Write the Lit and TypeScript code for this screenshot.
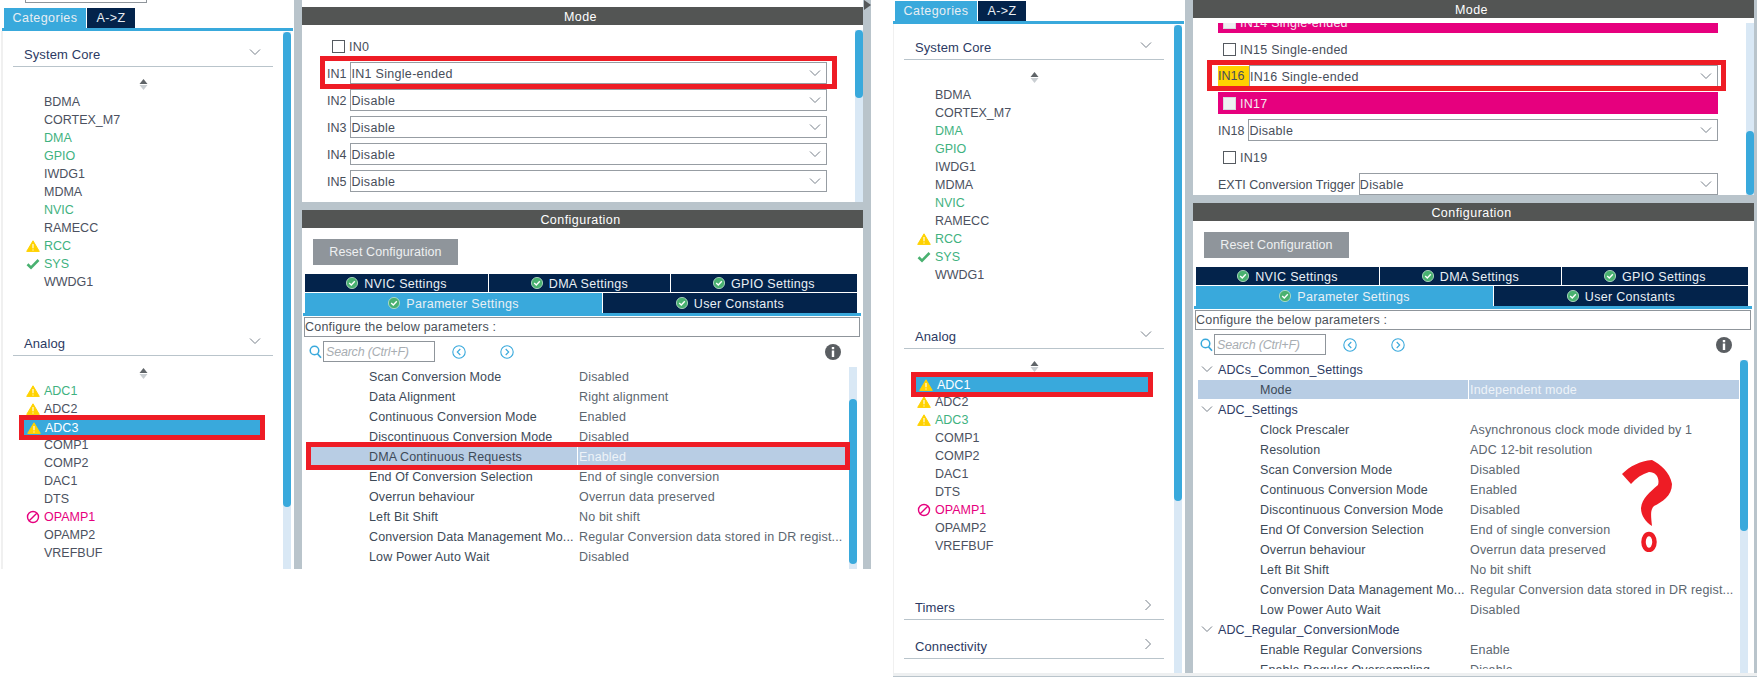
import { LitElement, html, css, svg } from "lit";
import { customElement } from "lit/decorators.js";

const chevDown = html`<svg class="chev" width="12" height="8" viewBox="0 0 12 8"><path d="M1 1.5 6 6.5 11 1.5" fill="none" stroke="#77808a" stroke-width="1"/></svg>`;
const chevRight = html`<svg class="chev" width="8" height="12" viewBox="0 0 8 12"><path d="M1.5 1 6.5 6 1.5 11" fill="none" stroke="#77808a" stroke-width="1"/></svg>`;
const sortIcon = html`<svg width="9" height="11" viewBox="0 0 9 11"><path d="M4.5 0 8.5 5H.5Z" fill="#5f6468"/><path d="M4.5 11 8.5 6H.5Z" fill="#c9ced2"/></svg>`;
const warn = html`<svg width="14" height="12" viewBox="0 0 14 12"><path d="M7 .8 13.3 11.4H.7Z" fill="#ffd200" stroke="#ffd200" stroke-linejoin="round"/><path d="M7 4v4.2M7 9.4v1" stroke="#fff" stroke-width="1.1"/></svg>`;
const tick = html`<svg width="14" height="12" viewBox="0 0 14 12"><path d="M1.5 6.2 5 9.6 12.5 2" fill="none" stroke="#49b170" stroke-width="2.6"/></svg>`;
const ban = html`<svg width="14" height="14" viewBox="0 0 14 14"><circle cx="7" cy="7" r="5.5" fill="none" stroke="#e6007e" stroke-width="1.4"/><path d="M3.2 10.8 10.8 3.2" stroke="#e6007e" stroke-width="1.4"/></svg>`;
const okDot = html`<svg class="ok" width="12" height="12" viewBox="0 0 12 12"><circle cx="6" cy="6" r="5.6" fill="#49b170" stroke="#bfe3cd" stroke-width=".8"/><path d="M3.2 6 5.3 8 8.8 4.3" fill="none" stroke="#fff" stroke-width="1.4"/></svg>`;
const searchIcon = html`<svg width="13" height="14" viewBox="0 0 13 14"><circle cx="5.5" cy="5.5" r="4.3" fill="none" stroke="#39a9dc" stroke-width="1.5"/><path d="M8.5 8.8 12 12.8" stroke="#39a9dc" stroke-width="1.7"/></svg>`;
const navIcon = (d: string) => html`<svg width="14" height="14" viewBox="0 0 14 14"><circle cx="7" cy="7" r="6.2" fill="none" stroke="#39a9dc" stroke-width="1.1"/><path d="${d}" fill="none" stroke="#39a9dc" stroke-width="1.1"/></svg>`;
const infoIcon = html`<svg width="16" height="16" viewBox="0 0 16 16"><circle cx="8" cy="8" r="8" fill="#5a5e62"/><path d="M6.8 3h2.4v2.2H6.8ZM6.8 6.6h2.4v6.4H6.8Z" fill="#fff"/></svg>`;
const question = html`<svg class="question" width="50" height="92" viewBox="0 0 50 92">${svg`<path d="M0 14C8 6 18 1 30 0C38 4 48 12 50 24C50 36 40 42 32 46C28 50 29 56 30 66C24 62 19 56 19 48C20 38 28 32 36 25C38 18 34 12 27 12C20 14 14 18 9 24Z" fill="#ee1c25"/><ellipse cx="27" cy="82" rx="5.5" ry="8" fill="none" stroke="#ee1c25" stroke-width="4.5"/>`}</svg>`;

type Item = { t: string; c?: string; i?: unknown; sel?: boolean };
const core: Item[] = [
  { t: "BDMA" }, { t: "CORTEX_M7" }, { t: "DMA", c: "g" }, { t: "GPIO", c: "g" }, { t: "IWDG1" }, { t: "MDMA" },
  { t: "NVIC", c: "g" }, { t: "RAMECC" }, { t: "RCC", c: "g", i: warn }, { t: "SYS", c: "g", i: tick }, { t: "WWDG1" },
];
const analog = (sel: number, green: number): Item[] =>
  ["ADC1", "ADC2", "ADC3"].map((t, k) => ({ t, i: warn, sel: k === sel, c: k === green ? "g" : "" } as Item)).concat([
    { t: "COMP1" }, { t: "COMP2" }, { t: "DAC1" }, { t: "DTS" }, { t: "OPAMP1", c: "p", i: ban }, { t: "OPAMP2" }, { t: "VREFBUF" },
  ]);

const scrollbar = (offset: number, size: number) =>
  html`<div class="track"><div class="thumb" style="margin-top:${offset}px;height:${size}px"></div></div>`;

const sectionHead = (t: string, open = true) =>
  html`<div class="sec-head"><span>${t}</span>${open ? chevDown : chevRight}</div>`;

const listBlock = (t: string, items: Item[]) => html`
  ${sectionHead(t)}
  <div class="sort">${sortIcon}</div>
  <ul class="list">
    ${items.map((i) => html`<li class="item ${i.c ?? ""} ${i.sel ? "sel" : ""}"><span class="slot">${i.i ?? ""}</span>${i.t}</li>`)}
  </ul>`;

const sidebar = (analogItems: Item[], thumb: number, extra: boolean, top: unknown) => html`
  <aside class="sidebar">
    ${top}
    <div class="side-tabs"><span class="stab on">Categories</span><span class="stab">A-&gt;Z</span></div>
    <div class="side-line"></div>
    <div class="side-body">
      <div class="side-content">
        ${listBlock("System Core", core)}
        <div class="sec-gap"></div>
        ${listBlock("Analog", analogItems)}
        ${extra ? html`<div class="sec-gap"></div>${sectionHead("Timers", false)}<div class="sec-next">${sectionHead("Connectivity", false)}</div>` : ""}
      </div>
      ${scrollbar(0, thumb)}
    </div>
  </aside>`;

const selRow = (label: string, value: string, cls = "") => html`
  <div class="mrow ${cls}"><span class="mlabel">${label}</span>
    <div class="select"><span>${value}</span>${chevDown}</div></div>`;
const chkRow = (label: string, pink = false) => html`
  <div class="mrow chk ${pink ? "pink" : ""}"><span class="box"></span><span class="chk-text">${label}</span></div>`;

const tabs = html`
  <div class="tabs r1">
    ${["NVIC Settings", "DMA Settings", "GPIO Settings"].map((t) => html`<div class="tab">${okDot}<span>${t}</span></div>`)}
  </div>
  <div class="tabs r2">
    <div class="tab on">${okDot}<span>Parameter Settings</span></div>
    <div class="tab">${okDot}<span>User Constants</span></div>
  </div>
  <div class="tab-line"></div>`;

const toolbar = html`
  <div class="cfg-note">Configure the below parameters :</div>
  <div class="tools">
    <span class="mag">${searchIcon}</span>
    <span class="search">Search (Ctrl+F)</span>
    <span class="nav1">${navIcon("M8.3 4 5.3 7 8.3 10")}</span>
    <span class="nav2">${navIcon("M5.7 4 8.7 7 5.7 10")}</span>
    <span class="info">${infoIcon}</span>
  </div>`;

type P = { n: string; v?: string; h?: boolean; hot?: boolean; red?: boolean };
const prow = (p: P) =>
  p.h
    ? html`<div class="prow head">${chevDown}<span>${p.n}</span></div>`
    : html`<div class="prow ${p.hot ? "hot" : ""} ${p.red ? "red" : ""}"><span class="pn">${p.n}</span><span class="pv">${p.v}</span></div>`;

const leftParams: P[] = [
  { n: "Scan Conversion Mode", v: "Disabled" },
  { n: "Data Alignment", v: "Right alignment" },
  { n: "Continuous Conversion Mode", v: "Enabled" },
  { n: "Discontinuous Conversion Mode", v: "Disabled" },
  { n: "DMA Continuous Requests", v: "Enabled", hot: true, red: true },
  { n: "End Of Conversion Selection", v: "End of single conversion" },
  { n: "Overrun behaviour", v: "Overrun data preserved" },
  { n: "Left Bit Shift", v: "No bit shift" },
  { n: "Conversion Data Management Mo...", v: "Regular Conversion data stored in DR regist..." },
  { n: "Low Power Auto Wait", v: "Disabled" },
];
const rightParams: P[] = [
  { n: "ADCs_Common_Settings", h: true },
  { n: "Mode", v: "Independent mode", hot: true },
  { n: "ADC_Settings", h: true },
  { n: "Clock Prescaler", v: "Asynchronous clock mode divided by 1" },
  { n: "Resolution", v: "ADC 12-bit resolution" },
  { n: "Scan Conversion Mode", v: "Disabled" },
  { n: "Continuous Conversion Mode", v: "Enabled" },
  { n: "Discontinuous Conversion Mode", v: "Disabled" },
  { n: "End Of Conversion Selection", v: "End of single conversion" },
  { n: "Overrun behaviour", v: "Overrun data preserved" },
  { n: "Left Bit Shift", v: "No bit shift" },
  { n: "Conversion Data Management Mo...", v: "Regular Conversion data stored in DR regist..." },
  { n: "Low Power Auto Wait", v: "Disabled" },
  { n: "ADC_Regular_ConversionMode", h: true },
  { n: "Enable Regular Conversions", v: "Enable" },
  { n: "Enable Regular Oversampling", v: "Disable" },
];

@customElement("app-root")
export class AppRoot extends LitElement {
  static styles = css`
    :host { display: flex; align-items: flex-start; gap: 22px; width: 1763px; height: 679px; overflow: hidden; background: #fff;
      font: 12.5px "Liberation Sans", Arial, sans-serif; color: #474e5a; --gutter: #b9c4cb; --blue: #39a9dc; --navy: #03234b; --red: #ee1c25; --track: #d9e8f5; }
    .shot { display: flex; flex-direction: column; flex: none; }
    .shot.a { width: 871px; height: 569px; }
    .shot.b { width: 864px; height: 677px; }
    .panes { display: flex; flex: 1; min-height: 0; }
    .band { height: 3px; background: #eef0f1; border-bottom: 1px solid var(--gutter); box-sizing: content-box; }

    .sidebar { display: flex; flex-direction: column; flex: none; background: #fff; }
    .a .sidebar { width: 294px; }
    .b .sidebar { width: 292px; }
    .topbox { height: 8px; }
    .topbox i { display: block; margin-left: 25px; width: 120px; height: 2px; border: 1px solid #8f959b; border-top: 0; }
    .b .side-tabs { margin-top: 1px; margin-left: 2px; }
    .side-tabs { display: flex; gap: 1px; height: 20px; margin-left: 4px; flex: none; }
    .stab { background: var(--navy); color: #e8eef3; width: 48px; text-align: center; line-height: 20px; letter-spacing: .45px; }
    .stab.on { background: var(--blue); width: 82px; }
    .side-line { height: 3px; background: var(--blue); margin: 0 1px 0 2px; flex: none; }
    .b .side-line { margin-left: 0; }
    .side-body { flex: 1; min-height: 0; display: flex; margin-left: 1px; border-left: 2px solid #f0f0f0; padding-left: 10px; overflow: hidden; }
    .b .side-body { margin-left: 0; border-left-width: 1px; padding-left: 10px; }
    .side-content { width: 260px; flex: none; }
    .side-body .track { margin: 1px 0 0 10px; }

    .sec-head { height: 36px; box-sizing: border-box; border-bottom: 1px solid #b9c4cb; display: flex; justify-content: space-between; padding: 11px 12px 0 11px; align-items: center; color: #2c3a63; font-size: 13px; letter-spacing: .1px; }
    .sec-head .chev { margin-top: -4px; }
    .sec-gap { height: 29px; }
    .sec-next { margin-top: 3px; }
    .sort { height: 26px; display: flex; justify-content: center; padding-top: 12px; box-sizing: border-box; }
    .list { list-style: none; margin: 0; padding: 0 0 0 11px; }
    .item { height: 18px; line-height: 18px; display: flex; align-items: center; width: 236px; color: #4b5160; font-size: 12.5px; white-space: nowrap; }
    .item.g { color: #3fb27f; }
    .item.p { color: #e6007e; }
    .slot { width: 20px; flex: none; display: flex; align-items: center; padding-left: 2px; box-sizing: border-box; }
    .item.sel { background: var(--blue); color: #fff; height: 15px; margin: 2px 0 1px; outline: 5px solid var(--red); position: relative; z-index: 1; }
    .b .item.sel { width: 232px; margin-left: 1px; }
    .item.sel .slot { padding-left: 3px; width: 21px; }

    .mainwrap { flex: 1; min-width: 0; background: var(--gutter); display: flex; flex-direction: column; position: relative; }
    .a .mainwrap { padding: 0 8px; }
    .b .mainwrap { padding: 0 3px 0 8px; }
    .a .mainwrap::after { content: ""; position: absolute; right: 0; top: 0; border-left: 7px solid #55585a; border-top: 5px solid transparent; border-bottom: 5px solid transparent; }
    .strip { height: 7px; background: #fff; flex: none; }
    .bar { height: 18px; line-height: 20px; background: #535554; color: #fff; text-align: center; flex: none; font-size: 12.5px; padding-right: 4px; letter-spacing: .45px; }
    .mode { height: 177px; flex: none; background: #fff; padding-top: 5px; box-sizing: border-box; display: flex; margin-bottom: 8px; }
    .mode-view { flex: 1; min-width: 0; display: flex; flex-direction: column; gap: 5px; padding: 5px 28px 0 25px; overflow: hidden; }
    .b .mode-view { justify-content: flex-end; padding-top: 0; }
    .mrow { height: 22px; flex: none; display: flex; align-items: center; position: relative; }
    .mlabel { padding-right: 4px; flex: none; padding-top: 1px; }
    .select { flex: 1; height: 22px; border: 1px solid #979da3; box-sizing: border-box; display: flex; align-items: center; justify-content: space-between; padding: 1px 5px 0 0; background: #fff; letter-spacing: .3px; }
    .select .chev { margin-top: -1px; }
    .chk { padding-left: 5px; gap: 4px; }
    .chk-text { letter-spacing: .25px; padding-top: 1px; }
    .box { width: 11px; height: 11px; border: 1px solid #555a60; background: #fff; flex: none; }
    .pink { background: #e6007e; color: #f4e9f0; }
    .pink .box { background: #eef0f1; border-color: #d6d9dc; }
    .ringa::after, .ringb::after { content: ""; position: absolute; border: 5px solid var(--red); pointer-events: none; }
    .ringa::after { inset: -6px -10px -5px -7px; }
    .ringb::after { inset: -5px -8px -4px -11px; }
    .warnlabel { background: #ffd200; height: 20px; line-height: 20px; padding: 0; width: 31px; box-sizing: border-box; }

    .cfg { flex: 1; min-height: 0; background: #fff; display: flex; flex-direction: column; }
    .reset { margin: 11px 0 9px 11px; width: 145px; height: 26px; background: #8f959b; color: #eef0f1; line-height: 26px; text-align: center; flex: none; letter-spacing: .1px; }
    .tabs { display: grid; gap: 1px; margin: 0 6px 0 3px; flex: none; }
    .r1 { height: 18px; margin-bottom: 1px; grid-template-columns: 183fr 181fr 186fr; }
    .r2 { height: 20px; grid-template-columns: 297fr 254fr; }
    .tab { background: var(--navy); color: #eaf0f5; display: flex; align-items: center; justify-content: center; gap: 6px; letter-spacing: .3px; font-size: 12.5px; }
    .tab span { padding-top: 1px; }
    .tab.on { background: var(--blue); }
    .tab-line { height: 3px; background: var(--blue); margin: 0 2px 0 1px; flex: none; }
    .cfg-note { height: 20px; line-height: 18px; margin: 1px 3px 0 2px; box-sizing: border-box; border: 1px solid #8f959b; color: #4a5058; flex: none; letter-spacing: .2px; }
    .tools { height: 21px; margin-top: 4px; display: flex; align-items: center; flex: none; padding-left: 7px; }
    .mag { width: 14px; display: flex; }
    .search { width: 112px; height: 21px; box-sizing: border-box; border: 1px solid #8f959b; line-height: 20px; padding-left: 2px; color: #a8adb2; font-style: italic; letter-spacing: -.2px; }
    .nav1 { margin-left: 17px; display: flex; }
    .nav2 { margin-left: 34px; display: flex; }
    .info { margin-left: auto; margin-right: 22px; display: flex; }
    .table { flex: 1; min-height: 0; display: flex; position: relative; margin-top: 4px; padding: 0 6px 0 5px; }
    .table .track { margin: 1px 0 0 1px; }
    .view { flex: 1; min-width: 0; overflow: hidden; }
    .b .view { margin-bottom: 4px; }
    .prow { height: 20px; line-height: 22px; display: flex; position: relative; color: #3d4a58; white-space: nowrap; letter-spacing: .12px; }
    .pn { box-sizing: border-box; flex: none; width: 270px; padding-left: 62px; }
    .pv { flex: 1; padding-left: 1px; color: #5c666f; border-left: 1px solid transparent; letter-spacing: .17px; }
    .head { align-items: center; color: #2c3a63; padding-left: 3px; gap: 5px; }
    .head span { padding-top: 1px; line-height: 20px; }
    .head .chev { width: 12px; }
    .hot { background: #b8cde4; height: 19px; line-height: 20px; margin-top: 1px; }
    .hot .pv { color: #eef3f8; border-left-color: #fff; }
    .a .hot { height: 18px; margin-bottom: 1px; line-height: 20px; }
    .red::after { content: ""; position: absolute; inset: -5px -2px -5px -1px; border: 5px solid var(--red); }
    .a .view { overflow: visible; height: 203px; }
    .track { width: 8px; flex: none; background: var(--track); align-self: stretch; }
    .thumb { background: var(--blue); border-radius: 4px; }
    .question { position: absolute; left: 429px; top: 101px; }
  `;

  render() {
    return html`
      <section class="shot a">
        <div class="panes">
          ${sidebar(analog(2, 0), 475, false, html`<div class="topbox"><i></i></div>`)}
          <div class="mainwrap">
            <div class="strip"></div>
            <div class="bar">Mode</div>
            <div class="mode">
              <div class="mode-view">
                ${chkRow("IN0")}
                ${selRow("IN1", "IN1 Single-ended", "ringa")}
                ${selRow("IN2", "Disable")}
                ${selRow("IN3", "Disable")}
                ${selRow("IN4", "Disable")}
                ${selRow("IN5", "Disable")}
              </div>
              ${scrollbar(0, 68)}
            </div>
            <div class="bar">Configuration</div>
            <div class="cfg">
              <div class="reset">Reset Configuration</div>
              ${tabs}
              ${toolbar}
              <div class="table">
                <div class="view">${leftParams.map(prow)}</div>
                ${scrollbar(32, 165)}
              </div>
            </div>
          </div>
        </div>
      </section>
      <section class="shot b">
        <div class="panes">
          ${sidebar(analog(0, 2), 476, true, "")}
          <div class="mainwrap">
            <div class="bar">Mode</div>
            <div class="mode">
              <div class="mode-view">
                ${chkRow("IN14 Single-ended", true)}
                ${chkRow("IN15 Single-ended")}
                <div class="mrow ringb"><span class="mlabel warnlabel">IN16</span><div class="select"><span>IN16 Single-ended</span>${chevDown}</div></div>
                ${chkRow("IN17", true)}
                ${selRow("IN18", "Disable")}
                ${chkRow("IN19")}
                ${selRow("EXTI Conversion Trigger", "Disable")}
              </div>
              ${scrollbar(108, 64)}
            </div>
            <div class="bar">Configuration</div>
            <div class="cfg">
              <div class="reset">Reset Configuration</div>
              ${tabs}
              ${toolbar}
              <div class="table">
                <div class="view">${rightParams.map(prow)}</div>
                ${scrollbar(0, 171)}
                ${question}
              </div>
            </div>
          </div>
        </div>
        <div class="band"></div>
      </section>
    `;
  }
}
